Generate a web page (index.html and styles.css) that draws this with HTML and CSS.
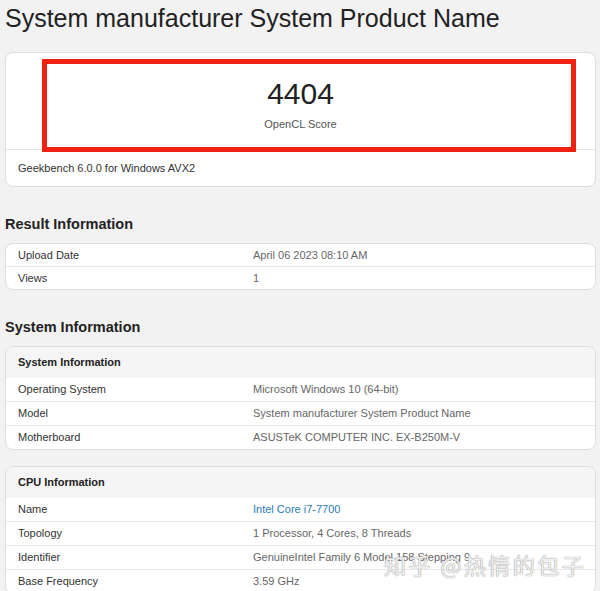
FILE: index.html
```html
<!DOCTYPE html>
<html lang="en">

<head>
    <meta charset="UTF-8">
    <meta name="viewport" content="width=device-width, initial-scale=1.0">
    <title>System manufacturer System Product Name - Geekbench</title>
    <link rel="stylesheet" href="styles.css">
</head>

<body>
    <div class="page">
        <h1 class="page-title">System manufacturer System Product Name</h1>

        <!-- Score card -->
        <div class="card score-card">
            <div class="score-box">
                <div class="score">4404</div>
                <div class="score-label">OpenCL Score</div>
                <div class="highlight"></div>
            </div>
            <div class="score-footer">Geekbench 6.0.0 for Windows AVX2</div>
        </div>

        <!-- Result Information -->
        <h2 class="section-title">Result Information</h2>
        <div class="card result-card">
            <div class="row">
                <div class="name">Upload Date</div>
                <div class="value">April 06 2023 08:10 AM</div>
            </div>
            <div class="row">
                <div class="name">Views</div>
                <div class="value">1</div>
            </div>
        </div>

        <!-- System Information -->
        <h2 class="section-title">System Information</h2>
        <div class="card">
            <div class="card-head">System Information</div>
            <div class="row">
                <div class="name">Operating System</div>
                <div class="value">Microsoft Windows 10 (64-bit)</div>
            </div>
            <div class="row">
                <div class="name">Model</div>
                <div class="value">System manufacturer System Product Name</div>
            </div>
            <div class="row">
                <div class="name">Motherboard</div>
                <div class="value">ASUSTeK COMPUTER INC. EX-B250M-V</div>
            </div>
        </div>

        <div class="card cpu-card">
            <div class="card-head">CPU Information</div>
            <div class="row">
                <div class="name">Name</div>
                <div class="value"><a href="#">Intel Core i7-7700</a></div>
            </div>
            <div class="row">
                <div class="name">Topology</div>
                <div class="value">1 Processor, 4 Cores, 8 Threads</div>
            </div>
            <div class="row">
                <div class="name">Identifier</div>
                <div class="value">GenuineIntel Family 6 Model 158 Stepping 9</div>
            </div>
            <div class="row">
                <div class="name">Base Frequency</div>
                <div class="value">3.59 GHz</div>
            </div>
        </div>
    </div>

    <!-- watermark -->
    <div class="watermark">知乎 @热情的包子</div>
</body>

</html>
```

FILE: styles.css
```css
body {
    font-family: 'Liberation Sans', Arial, sans-serif;
    background-color: #f2f2f2;
    margin: 0;
    color: #333;
}

.page {
    padding: 0 4px 0 5px;
}

.page-title {
    font-size: 25px;
    font-weight: normal;
    color: #222;
    margin: 0;
    padding-top: 2px;
    line-height: 32px;
    height: 52px;
    box-sizing: border-box;
}

.card {
    background-color: #fff;
    border: 1px solid #ddd;
    border-radius: 8px;
    overflow: hidden;
}

/* Score card */
.score-box {
    position: relative;
    height: 96px;
    border-bottom: 1px solid #e5e5e5;
    text-align: center;
}

.score {
    font-size: 30px;
    color: #222;
    padding-top: 24px;
    line-height: 34px;
}

.score-label {
    font-size: 11px;
    color: #555;
    margin-top: 7px;
}

.highlight {
    position: absolute;
    left: 36px;
    top: 6px;
    width: 524px;
    height: 83px;
    border: 5px solid #ee2211;
}

.score-footer {
    font-size: 11px;
    color: #333;
    padding: 0 12px;
    line-height: 36px;
}

.section-title {
    font-size: 14.5px;
    font-weight: bold;
    color: #222;
    margin: 0;
    padding: 27px 0 9px;
    line-height: 20px;
}

.card-head {
    background-color: #f5f5f5;
    font-size: 11px;
    font-weight: bold;
    color: #222;
    padding: 0 12px;
    line-height: 31px;
}

.row {
    display: grid;
    grid-template-columns: 235px 1fr;
    font-size: 11px;
    line-height: 23px;
    padding: 0 12px;
    border-top: 1px solid #e8e8e8;
}

.result-card .row {
    line-height: 22px;
}

.card-head + .row,
.card > .row:first-child {
    border-top: none;
}

.row .name {
    color: #333;
}

.row .value {
    color: #666;
}

.row .value a {
    color: #2a7ab8;
    text-decoration: none;
}

.cpu-card {
    margin-top: 16px;
}

.watermark {
    position: absolute;
    left: 384px;
    top: 549px;
    font-family: 'Noto Sans CJK SC', sans-serif;
    font-size: 22px;
    line-height: 30px;
    letter-spacing: 2.5px;
    color: rgba(255, 255, 255, 0.85);
    text-shadow: 0 0 1px #999, 0 0 1px #999;
}
```
